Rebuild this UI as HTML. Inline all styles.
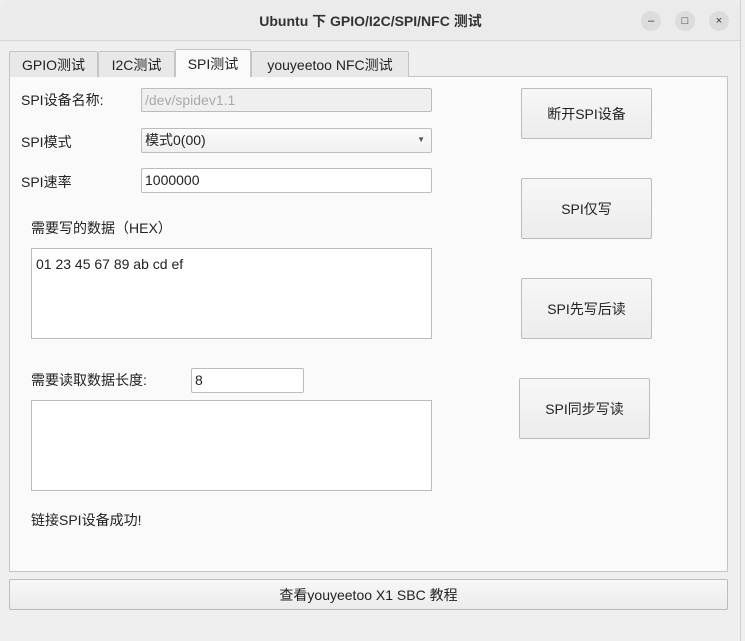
<!DOCTYPE html><html><head><meta charset="utf-8"><style>
body{margin:0;width:745px;height:641px;background:#efefef;font-family:"Liberation Sans","Noto Sans CJK SC",sans-serif;font-size:14px;color:#222;position:relative;overflow:hidden}
.a{position:absolute;box-sizing:border-box}
.title{left:0;top:0;width:741px;height:41px;background:#ebebeb;border-bottom:1px solid #d6d6d6;border-radius:10px 10px 0 0;text-align:center;line-height:42px;font-weight:bold;font-size:14px;color:#333}
.wb{width:20px;height:20px;border-radius:10px;background:#dcdcdc;top:11px;font-size:11px;text-align:center;line-height:20px;color:#333}
.tab{top:51px;height:26px;border:1px solid #c4c4c4;border-bottom:none;background:#e8e8e8;line-height:26px;text-align:center;border-radius:2px 2px 0 0}
.panel{left:9px;top:76px;width:719px;height:496px;border:1px solid #c4c4c4;background:#fafafa}
.in{border:1px solid #bcbcbc;background:#fff;border-radius:2px;padding-left:3px;line-height:22px}
.btn{border:1px solid #bcbcbc;border-radius:2px;background:linear-gradient(#f7f7f7,#ececec);text-align:center;line-height:58px}
</style></head><body>
<div class="a title">Ubuntu 下 GPIO/I2C/SPI/NFC 测试</div>
<div class="a wb" style="left:641px">–</div><div class="a wb" style="left:675px">□</div><div class="a wb" style="left:709px">×</div>
<div class="a" style="left:740px;top:0;width:1px;height:641px;background:#cfcfcf"></div>
<div class="a panel"></div>
<div class="a tab" style="left:9px;width:89px">GPIO测试</div>
<div class="a tab" style="left:98px;width:77px">I2C测试</div>
<div class="a tab" style="left:175px;width:76px;top:49px;height:28px;background:#fafafa;line-height:29px">SPI测试</div>
<div class="a tab" style="left:251px;width:158px">youyeetoo NFC测试</div>
<div class="a" style="left:21px;top:90px">SPI设备名称:</div>
<div class="a in" style="left:141px;top:88px;width:291px;height:24px;background:#efefef;color:#aaa">/dev/spidev1.1</div>
<div class="a" style="left:21px;top:132px">SPI模式</div>
<div class="a in" style="left:141px;top:128px;width:291px;height:25px;background:linear-gradient(#fbfbfb,#f0f0f0)">模式0(00)<span style="position:absolute;right:6px;top:0;font-size:8px;color:#555">▼</span></div>
<div class="a" style="left:21px;top:172px">SPI速率</div>
<div class="a in" style="left:141px;top:168px;width:291px;height:25px">1000000</div>
<div class="a" style="left:31px;top:218px">需要写的数据（HEX）</div>
<div class="a in" style="left:31px;top:248px;width:401px;height:91px;border-radius:0;padding:6px 4px;line-height:18px">01 23 45 67 89 ab cd ef</div>
<div class="a" style="left:31px;top:370px">需要读取数据长度:</div>
<div class="a in" style="left:191px;top:368px;width:113px;height:25px">8</div>
<div class="a in" style="left:31px;top:400px;width:401px;height:91px;border-radius:0"></div>
<div class="a" style="left:31px;top:510px">链接SPI设备成功!</div>
<div class="a btn" style="left:521px;top:88px;width:131px;height:51px;line-height:51px">断开SPI设备</div>
<div class="a btn" style="left:521px;top:178px;width:131px;height:61px;line-height:61px">SPI仅写</div>
<div class="a btn" style="left:521px;top:278px;width:131px;height:61px;line-height:61px">SPI先写后读</div>
<div class="a btn" style="left:519px;top:378px;width:131px;height:61px;line-height:61px">SPI同步写读</div>
<div class="a btn" style="left:9px;top:579px;width:719px;height:31px;line-height:31px">查看youyeetoo X1 SBC 教程</div>
</body></html>
